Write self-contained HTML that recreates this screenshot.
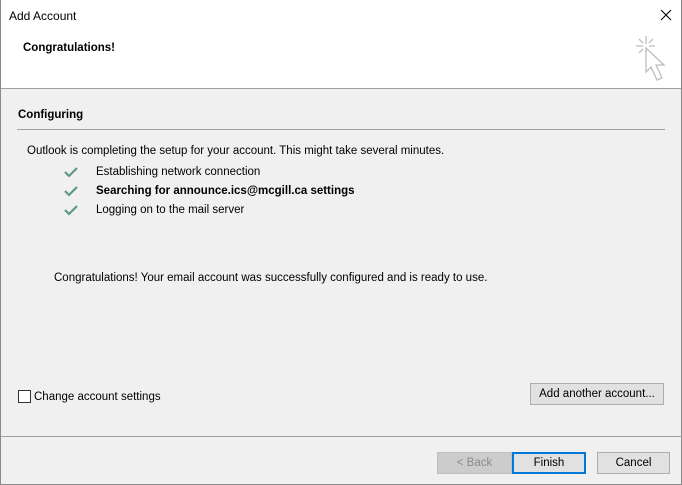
<!DOCTYPE html>
<html><head><style>
*{margin:0;padding:0;box-sizing:border-box}
body{width:682px;height:485px;overflow:hidden;background:#f0f0f0;font-family:"Liberation Sans",sans-serif;font-size:11.5px;color:#000;position:relative}
.win{position:absolute;left:0;top:0;width:682px;height:485px;border:1px solid #8a8a8a;border-top:none;background:#f0f0f0}
.top{position:absolute;left:0;top:0;width:680px;height:89px;background:#fff;border-bottom:1px solid #a0a0a0}
.a{position:absolute;white-space:nowrap}
.btn{position:absolute;height:22px;border:1px solid #adadad;background:#e1e1e1;text-align:center;line-height:20px}
</style></head><body>
<div class="win">
<div class="top">
 <div class="a" style="left:8px;top:9px;font-size:12px">Add Account</div>
 <svg class="a" style="left:659px;top:9px" width="12" height="12"><path d="M1 1L11 11M11 1L1 11" stroke="#000" stroke-width="1.1"/></svg>
 <div class="a" style="left:22px;top:42px;font-weight:bold">Congratulations!</div>
 <svg class="a" style="left:629px;top:34px" width="40" height="52" fill="none" stroke="#bdbdbd" stroke-width="1.3">
  <path d="M16 2V10M16 16V18M6 12H13M19 12H25M9 5L13 9M23 5L19 9M9 19L13 15"/>
  <path d="M16 14L16 38L21 33L27 46L32 44L26 31L34 31Z"/>
 </svg>
</div>
<div class="a" style="left:17px;top:109px;font-weight:bold">Configuring</div>
<div class="a" style="left:16px;top:129px;width:648px;height:1px;background:#a0a0a0"></div>
<div class="a" style="left:26px;top:145px">Outlook is completing the setup for your account. This might take several minutes.</div>
<svg class="a" style="left:63px;top:166px" width="14" height="60" fill="none" stroke="#5b9a7f" stroke-width="2.2">
 <path d="M1 6L5 10L13 2"/><path d="M1 25L5 29L13 21"/><path d="M1 44L5 48L13 40"/>
</svg>
<div class="a" style="left:95px;top:166px">Establishing network connection</div>
<div class="a" style="left:95px;top:185px;font-weight:bold">Searching for announce.ics@mcgill.ca settings</div>
<div class="a" style="left:95px;top:204px">Logging on to the mail server</div>
<div class="a" style="left:53px;top:272px">Congratulations! Your email account was successfully configured and is ready to use.</div>
<div class="a" style="left:17px;top:390px;width:13px;height:13px;border:1px solid #333;background:#fff"></div>
<div class="a" style="left:33px;top:391px">Change account settings</div>
<div class="btn" style="left:529px;top:383px;width:134px">Add another account...</div>
<div class="a" style="left:0;top:436px;width:682px;height:1px;background:#a0a0a0"></div>
<div class="btn" style="left:436px;top:452px;width:75px;color:#8a8a8a;background:#cccccc;border-color:#bfbfbf">&lt; Back</div>
<div class="btn" style="left:511px;top:452px;width:74px;border:2px solid #0078d7;line-height:18px">Finish</div>
<div class="btn" style="left:596px;top:452px;width:73px">Cancel</div>
</div>
</body></html>
